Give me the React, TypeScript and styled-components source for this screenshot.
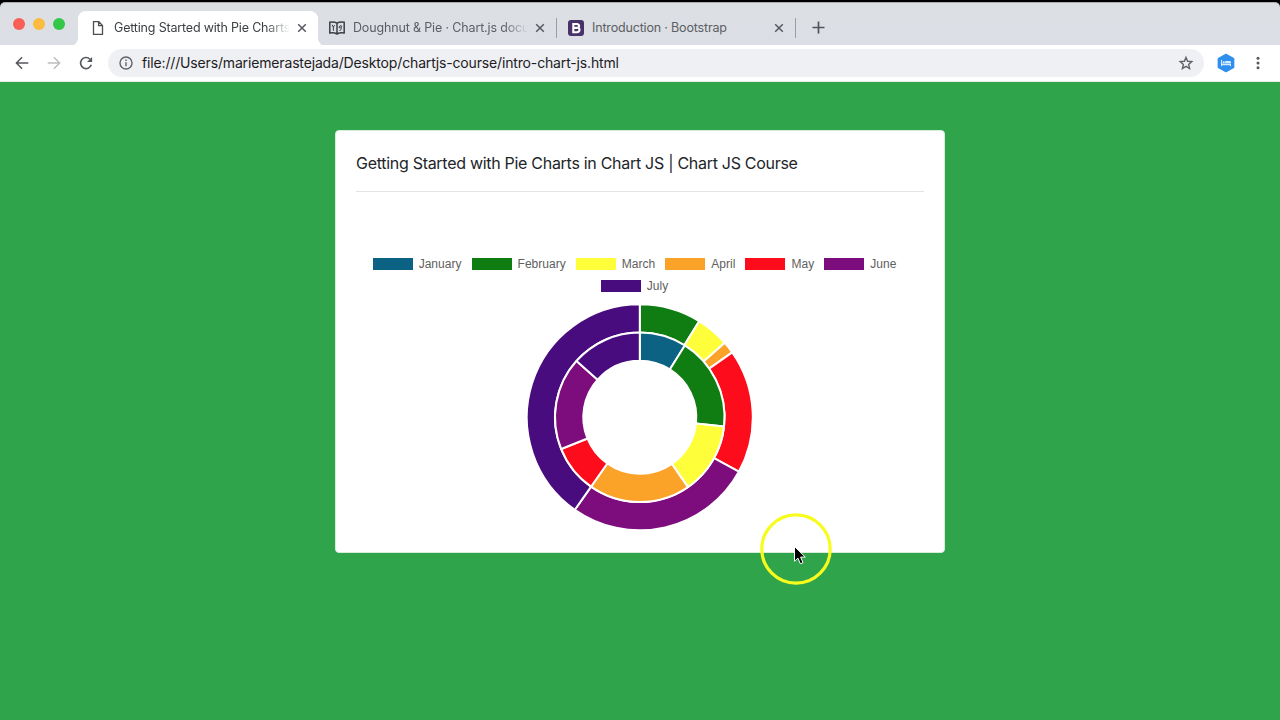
import React from 'react';
import styled, { createGlobalStyle } from 'styled-components';

const GlobalStyle = createGlobalStyle`
  * { box-sizing: border-box; }
  body { margin: 0; background: #30a44a; font-family: Inter, "Liberation Sans", sans-serif; overflow: hidden; }
  svg { display: block; flex: none; }
`;

const Window = styled.div`
  display: flex;
  flex-direction: column;
  width: 1280px;
  height: 720px;
  background: #000;
  padding-top: 2px;
`;

const TabStrip = styled.div`
  display: flex;
  height: 43px;
  padding: 8px 0 0 13px;
  border-top: 1px solid #a9abae;
  border-radius: 5px 5px 0 0;
  background: linear-gradient(#dcdfe2, #dcdee6);
`;

const Lights = styled.div`
  display: flex;
  gap: 8px;
  width: 65px;
  padding-top: 7px;
`;

const Light = styled.span<{ $color: string }>`
  width: 12px;
  height: 12px;
  border-radius: 50%;
  background: ${(p) => p.$color};
`;

const Tab = styled.div<{ $active?: boolean; $width: number }>`
  position: relative;
  display: flex;
  align-items: center;
  width: ${(p) => p.$width}px;
  height: 34px;
  padding: 0 11px 0 ${(p) => (p.$active ? 12 : 11)}px;
  border-radius: 8px 8px 0 0;
  background: ${(p) => (p.$active ? '#fff' : 'transparent')};
  box-shadow: ${(p) => (p.$active ? '0 1px 0 #fff' : 'none')};
  color: ${(p) => (p.$active ? '#3c4043' : '#5b5e63')};
`;

const TabFoot = styled.svg<{ $side: 'left' | 'right' }>`
  position: absolute;
  bottom: -1px;
  ${(p) => p.$side}: -8px;
`;

const TabTitle = styled.span<{ $fade?: boolean; $spacing: number }>`
  flex: 1;
  min-width: 0;
  margin: 0 7px 0 8px;
  overflow: hidden;
  white-space: nowrap;
  font-size: 12.5px;
  line-height: 18px;
  letter-spacing: ${(p) => p.$spacing}px;
  ${(p) => p.$fade && 'mask-image: linear-gradient(to right, #000 calc(100% - 24px), transparent);'}
`;

const Divider = styled.span`
  width: 1px;
  height: 20px;
  margin-top: 7px;
  background: #9b9da3;
`;

const NewTab = styled.div`
  padding: 10px 0 0 16px;
`;

const Toolbar = styled.div`
  display: flex;
  align-items: center;
  height: 37px;
  padding: 0 15px;
  background: #fff;
  border-bottom: 1px solid #e3ece5;
`;

const Nav = styled.div`
  display: flex;
  gap: 18px;
  width: 93px;
`;

const Address = styled.div`
  display: flex;
  align-items: center;
  width: 1096px;
  height: 28px;
  padding: 0 10px 0 11px;
  border-radius: 14px;
  background: #eff0f3;
`;

const Url = styled.span`
  flex: 1;
  margin-left: 9px;
  color: #1d2023;
  font-size: 14px;
  line-height: 20px;
  letter-spacing: -0.155px;
`;

const Actions = styled.div`
  display: flex;
  align-items: center;
  gap: 20px;
  margin-left: 12px;
`;

const Page = styled.main`
  flex: 1;
  display: flex;
  justify-content: center;
  align-items: flex-start;
  padding-top: 48px;
  background: #30a44a;
`;

const Card = styled.section`
  display: flex;
  flex-direction: column;
  width: 610px;
  height: 423px;
  padding: 20px;
  border: 1px solid #d8ecdc;
  border-radius: 4px;
  background: #fff;
`;

const Heading = styled.h1`
  margin: 0;
  padding-bottom: 16px;
  height: 41px;
  border-bottom: 1px solid #e3e3e3;
  color: #212529;
  font-size: 16px;
  font-weight: 400;
  line-height: 24px;
  letter-spacing: -0.29px;
  white-space: nowrap;
`;

const Legend = styled.div`
  display: flex;
  flex-wrap: wrap;
  justify-content: center;
  gap: 10px;
  padding: 66px 0 0;
  margin-left: -11px;
`;

const LegendItem = styled.div`
  display: flex;
  align-items: center;
  gap: 6px;
  height: 12px;
  color: #606060;
  font: 12px/12px "Liberation Sans", Arial, sans-serif;
  letter-spacing: 0.03px;
`;

const Swatch = styled.span<{ $color: string }>`
  width: 40px;
  height: 12px;
  background: ${(p) => p.$color};
`;

const ChartArea = styled.div`
  display: flex;
  justify-content: center;
  padding-top: 11px;
`;

const Pointer = styled.svg`
  position: absolute;
  left: 758px;
  top: 511px;
`;

const months = [
  { name: 'January', color: '#0b6283' },
  { name: 'February', color: '#107d12' },
  { name: 'March', color: '#fffe3a' },
  { name: 'April', color: '#fba329' },
  { name: 'May', color: '#fd0d1b' },
  { name: 'June', color: '#7d0d7d' },
  { name: 'July', color: '#490c7e' },
];

// Cumulative end angle of each month, in degrees clockwise from the top.
const outerRing = [0, 31.7, 48.8, 54.9, 118.8, 215.1, 360];
const innerRing = [32.1, 96.2, 145.4, 215.1, 248, 311.7, 360];

function slicePath(start: number, end: number, r0: number, r1: number) {
  const at = (deg: number, r: number) => {
    const a = (deg * Math.PI) / 180;
    return `${(r * Math.sin(a)).toFixed(2)} ${(-r * Math.cos(a)).toFixed(2)}`;
  };
  const large = end - start > 180 ? 1 : 0;
  return `M${at(start, r1)}A${r1} ${r1} 0 ${large} 1 ${at(end, r1)}L${at(end, r0)}A${r0} ${r0} 0 ${large} 0 ${at(start, r0)}Z`;
}

function Ring({ ends, r0, r1 }: { ends: number[]; r0: number; r1: number }) {
  return (
    <g stroke="#fff" strokeWidth={2} strokeLinejoin="bevel">
      {ends.map((end, i) => {
        const start = i ? ends[i - 1] : 0;
        return end > start ? (
          <path key={months[i].name} d={slicePath(start, end, r0, r1)} fill={months[i].color} />
        ) : null;
      })}
    </g>
  );
}

const Close = () => (
  <svg width="10" height="10" viewBox="0 0 10 10" stroke="#55585c" strokeWidth="1.5" fill="none">
    <path d="M1.2 1.200l7.600 7.600M8.800 1.200l-7.600 7.600" />
  </svg>
);

const FileIcon = () => (
  <svg width="16" height="16" viewBox="0 0 16 16" fill="none" stroke="#4c4e51" strokeWidth="1.3">
    <path d="M3.500 1.700h5.300l3.700 3.800v8.800h-9zM8.600 1.900v3.800h3.800" />
  </svg>
);

const BookIcon = () => (
  <svg width="16" height="16" viewBox="0 0 16 16" fill="none" stroke="#3d4043" strokeWidth="1.5">
    <path d="M.8 2.200c2.400-.4 5.200-.3 7.200 1 2-1.300 4.800-1.400 7.200-1v10.800c-2.400-.3-5.200-.2-7.200 1-2-1.200-4.800-1.300-7.200-1zM8 3.200v10.500" />
    <path d="M3.100 4.800l1.100 2.200 1.500-1.800M4.400 6.500v4.300M10.300 8.200c-.7-2 1.800-3.600 2.300-2 .5 2-2.300 2.500-1.300.5M12.700 8.300l-2 2.700" strokeWidth="1" />
  </svg>
);

const BootstrapIcon = () => (
  <svg width="16" height="16" viewBox="0 0 16 16">
    <rect width="16" height="16" rx="3" fill="#493267" />
    <path d="M5.300 4h3.400c3 0 3 3.300.900 3.800 2.800.4 2.500 4.400-.8 4.400H5.300z M5.500 7.900h3.800" fill="none" stroke="#fff" strokeWidth="2.100" />
  </svg>
);

function App() {
  return (
    <Window>
      <GlobalStyle />
      <TabStrip>
        <Lights>
          <Light $color="#f95e57" />
          <Light $color="#fbbc40" />
          <Light $color="#34c748" />
        </Lights>
        <Tab $active $width={240}>
          <TabFoot $side="left" width="8" height="8"><path d="M8 0v8H0a8 8 0 0 0 8-8" fill="#fff" /></TabFoot>
          <FileIcon />
          <TabTitle $fade $spacing={-0.18}>Getting Started with Pie Charts in Chart JS</TabTitle>
          <Close />
          <TabFoot $side="right" width="8" height="8"><path d="M0 0v8h8a8 8 0 0 1-8-8" fill="#fff" /></TabFoot>
        </Tab>
        <Tab $width={238}>
          <BookIcon />
          <TabTitle $fade $spacing={-0.15}>Doughnut &amp; Pie · Chart.js documentation</TabTitle>
          <Close />
        </Tab>
        <Divider />
        <Tab $width={238}>
          <BootstrapIcon />
          <TabTitle $spacing={-0.17}>Introduction · Bootstrap</TabTitle>
          <Close />
        </Tab>
        <Divider />
        <NewTab>
          <svg width="13" height="13" viewBox="0 0 13 13" stroke="#505357" strokeWidth="1.700"><path d="M6.500.5v12M.5 6.500h12" /></svg>
        </NewTab>
      </TabStrip>
      <Toolbar>
        <Nav>
          <svg width="14" height="14" viewBox="0 0 14 14" fill="none" stroke="#55585c" strokeWidth="1.500"><path d="M13.300 7H1.700M7.100 1.300L1.400 7l5.700 5.700" /></svg>
          <svg width="14" height="14" viewBox="0 0 14 14" fill="none" stroke="#bbbdc0" strokeWidth="1.500"><path d="M.7 7h11.600M6.900 1.300L12.600 7l-5.700 5.700" /></svg>
          <svg width="14" height="14" viewBox="0 0 14 14" fill="none" stroke="#55585c" strokeWidth="1.600"><path d="M12.300 8.800A5.500 5.500 0 1 1 11 3.200" /><path d="M13.100 1v5.100H8z" fill="#55585c" stroke="none" /></svg>
        </Nav>
        <Address>
          <svg width="14" height="14" viewBox="0 0 14 14" fill="none" stroke="#5f6368" strokeWidth="1.400"><circle cx="7" cy="7" r="6" /><path d="M7 6.300v4M7 3.500v1.500" /></svg>
          <Url>file:///Users/mariemerastejada/Desktop/chartjs-course/intro-chart-js.html</Url>
          <svg width="16" height="16" viewBox="0 0 16 16" fill="none" stroke="#5f6368" strokeWidth="1.400"><path d="M8 2.400l1.600 3.900 4.200.3-3.200 2.800 1 4.100L8 11.300l-3.600 2.200 1-4.100-3.200-2.800 4.200-.3z" /></svg>
        </Address>
        <Actions>
          <svg width="20" height="20" viewBox="0 0 20 20">
            <path d="M10 1.500l7.600 4.100v8.800L10 18.500l-7.600-4.100V5.600z" fill="#2f8fee" stroke="#2f8fee" strokeWidth="1.500" strokeLinejoin="round" />
            <path d="M5 7h1v3.500h9v2.800h-1v-1H6v1H5zM6.800 8.200h1.800v1.700H6.800zM9.200 7.900h4.300q1.500 0 1.500 1.300v.7H9.200z" fill="#d9ebff" />
          </svg>
          <svg width="4" height="14" viewBox="0 0 4 14" fill="#55585c"><circle cx="2" cy="2.200" r="1.500" /><circle cx="2" cy="7" r="1.500" /><circle cx="2" cy="11.800" r="1.500" /></svg>
        </Actions>
      </Toolbar>
      <Page>
        <Card>
          <Heading>Getting Started with Pie Charts in Chart JS | Chart JS Course</Heading>
          <Legend>
            {months.map((m) => (
              <LegendItem key={m.name}>
                <Swatch $color={m.color} />
                {m.name}
              </LegendItem>
            ))}
          </Legend>
          <ChartArea>
            <svg width="228" height="228" viewBox="-113.8 -114.3 228 228">
              <Ring ends={outerRing} r0={84.75} r1={113} />
              <Ring ends={innerRing} r0={56.5} r1={84.75} />
            </svg>
          </ChartArea>
        </Card>
      </Page>
      <Pointer width="76" height="76" viewBox="0 0 76 76">
        <circle cx="38" cy="38" r="34.200" fill="none" stroke="#f8fc1e" strokeWidth="3.200" />
        <path d="M36.500 35.500v14.800l3.400-3.200 2.500 5.700 2.600-1.100-2.400-5.600h4.700z" fill="#000" stroke="#fff" strokeWidth="1" />
      </Pointer>
    </Window>
  );
}

export default App;
